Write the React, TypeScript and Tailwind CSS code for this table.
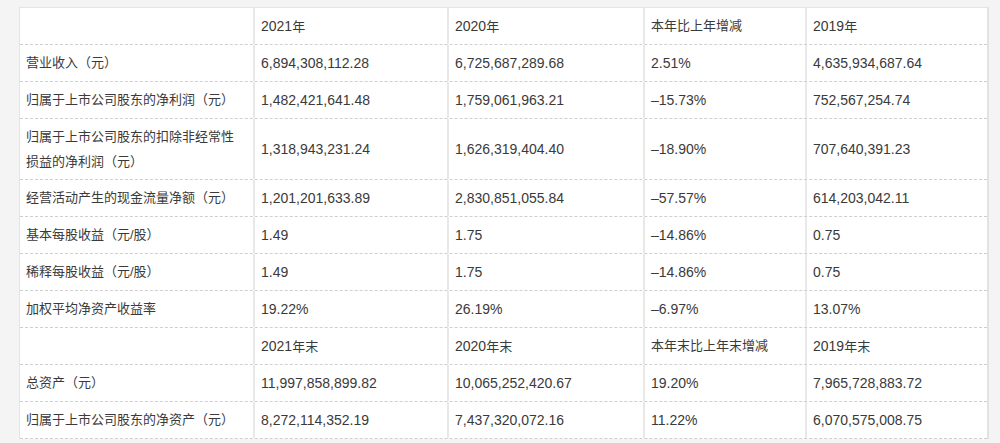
import React from "react";

type Row = { cells: string[]; tall?: boolean };

const rows: Row[] = [
  { cells: ["", "2021年", "2020年", "本年比上年增减", "2019年"] },
  { cells: ["营业收入（元）", "6,894,308,112.28", "6,725,687,289.68", "2.51%", "4,635,934,687.64"] },
  { cells: ["归属于上市公司股东的净利润（元）", "1,482,421,641.48", "1,759,061,963.21", "–15.73%", "752,567,254.74"] },
  {
    cells: ["归属于上市公司股东的扣除非经常性损益的净利润（元）", "1,318,943,231.24", "1,626,319,404.40", "–18.90%", "707,640,391.23"],
    tall: true,
  },
  { cells: ["经营活动产生的现金流量净额（元）", "1,201,201,633.89", "2,830,851,055.84", "–57.57%", "614,203,042.11"] },
  { cells: ["基本每股收益（元/股）", "1.49", "1.75", "–14.86%", "0.75"] },
  { cells: ["稀释每股收益（元/股）", "1.49", "1.75", "–14.86%", "0.75"] },
  { cells: ["加权平均净资产收益率", "19.22%", "26.19%", "–6.97%", "13.07%"] },
  { cells: ["", "2021年末", "2020年末", "本年末比上年末增减", "2019年末"] },
  { cells: ["总资产（元）", "11,997,858,899.82", "10,065,252,420.67", "19.20%", "7,965,728,883.72"] },
  { cells: ["归属于上市公司股东的净资产（元）", "8,272,114,352.19", "7,437,320,072.16", "11.22%", "6,070,575,008.75"] },
];

const widths = ["w-[235px]", "w-[194px]", "w-[196px]", "w-[162px]", "w-[182px]"];

// digits and latin punctuation render a touch larger than the CJK labels
function Mixed({ text }: { text: string }) {
  const parts = text.match(/[0-9.,%–\-]+|[^0-9.,%–\-]+/g) || [];
  return (
    <>
      {parts.map((p, i) =>
        /^[0-9.,%–\-]+$/.test(p) ? (
          <span key={i} className="text-[14px]">
            {p}
          </span>
        ) : (
          <span key={i}>{p}</span>
        )
      )}
    </>
  );
}

export default function App() {
  return (
    <div className="w-[1000px] h-[443px] bg-[#f4f4f4] pt-[7px] pl-[19px] font-['Liberation_Sans','Noto_Sans_CJK_SC',sans-serif] text-[13px] text-[#3a3a3a]">
      <div className="w-[970px] bg-white border-l border-t border-[#e4e4e4] border-r-2 border-r-[#e2e2e2]">
        {rows.map((row, i) => (
          <div
            key={i}
            className={`flex border-b border-[#cfcfcf] [border-bottom-style:dashed] ${row.tall ? "h-[61px]" : "h-[37px]"}`}
          >
            {row.cells.map((c, j) => (
              <div
                key={j}
                className={`${widths[j]} shrink-0 flex items-center pl-[6px] pr-2 ${j < 4 ? "border-r-2 border-[#e8e8e8]" : ""}`}
              >
                <span className={row.tall && j === 0 ? "leading-[25px]" : "leading-[16px]"}>
                  <Mixed text={c} />
                </span>
              </div>
            ))}
          </div>
        ))}
      </div>
    </div>
  );
}
